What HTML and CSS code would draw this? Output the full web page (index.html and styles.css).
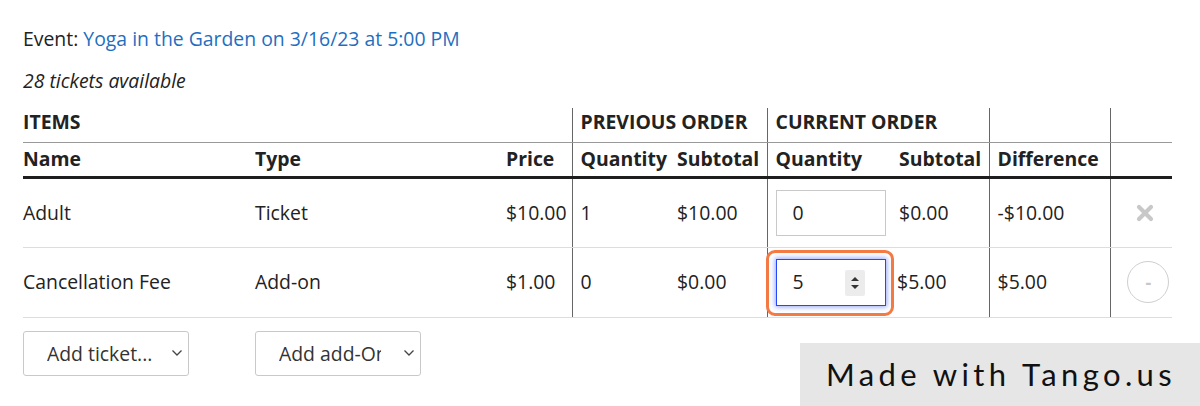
FILE: index.html
```html
<!DOCTYPE html>
<html>
<head>
<meta charset="utf-8">
<link rel="stylesheet" href="styles.css">
</head>
<body>
<div class="page">
  <p class="event">Event: <a class="event-link" href="#">Yoga in the Garden on 3/16/23 at 5:00 PM</a></p>
  <p class="avail">28 tickets available</p>

  <table class="order">
    <colgroup>
      <col class="c-name"><col class="c-type"><col class="c-price">
      <col class="c-pq"><col class="c-ps">
      <col class="c-cq"><col class="c-cs">
      <col class="c-diff"><col class="c-act">
    </colgroup>
    <thead>
      <tr class="group-row">
        <th colspan="3" class="first">ITEMS</th>
        <th colspan="2" class="sep">PREVIOUS ORDER</th>
        <th colspan="2" class="sep">CURRENT ORDER</th>
        <th class="sep"></th>
        <th class="sep"></th>
      </tr>
      <tr class="col-row">
        <th class="first">Name</th>
        <th>Type</th>
        <th>Price</th>
        <th class="sep">Quantity</th>
        <th>Subtotal</th>
        <th class="sep">Quantity</th>
        <th>Subtotal</th>
        <th class="sep">Difference</th>
        <th class="sep"></th>
      </tr>
    </thead>
    <tbody>
      <tr>
        <td class="first">Adult</td>
        <td>Ticket</td>
        <td>$10.00</td>
        <td class="sep">1</td>
        <td>$10.00</td>
        <td class="sep"><div class="qty-box">0</div></td>
        <td>$0.00</td>
        <td class="sep">-$10.00</td>
        <td class="sep act">
          <svg class="x-icon" width="20" height="20" viewBox="0 0 20 20"><path d="M4 4 L16 16 M16 4 L4 16" stroke="#c8c8c8" stroke-width="4.2" stroke-linecap="round"/></svg>
        </td>
      </tr>
      <tr>
        <td class="first">Cancellation Fee</td>
        <td>Add-on</td>
        <td>$1.00</td>
        <td class="sep">0</td>
        <td>$0.00</td>
        <td class="sep">
          <div class="qty-box focused">5
            <span class="spinner">
              <svg width="20" height="26" viewBox="0 0 20 26"><path d="M6 11 L10 7 L14 11 Z" fill="#333"/><path d="M6 15 L10 19 L14 15 Z" fill="#333"/></svg>
            </span>
            <span class="highlight"></span>
          </div>
        </td>
        <td class="tight">$5.00</td>
        <td class="sep">$5.00</td>
        <td class="sep act"><span class="minus">-</span></td>
      </tr>
    </tbody>
  </table>

  <div class="adders">
    <div class="select sel-ticket"><span class="sel-text">Add ticket...</span>
      <svg class="chev" width="12" height="8" viewBox="0 0 12 8"><path d="M1.5 1.5 L6 6 L10.5 1.5" fill="none" stroke="#444" stroke-width="1.3"/></svg>
    </div>
    <div class="select sel-addon"><span class="sel-text">Add add-On</span>
      <svg class="chev" width="12" height="8" viewBox="0 0 12 8"><path d="M1.5 1.5 L6 6 L10.5 1.5" fill="none" stroke="#444" stroke-width="1.3"/></svg>
    </div>
  </div>
</div>
<div class="tango">Made with Tango.us</div>
</body>
</html>
```
FILE: styles.css
```css
html, body {
  margin: 0;
  padding: 0;
  background: #fff;
}
body {
  font-family: "Open Sans", "Liberation Sans", sans-serif;
  font-size: 19.4px;
  color: #222;
  width: 1200px;
  height: 406px;
  overflow: hidden;
  position: relative;
}
.page {
  padding: 26px 28px 0 23px;
}
.event {
  margin: 0;
  line-height: 26px;
}
.event-link {
  color: #1f6fbf;
  text-decoration: none;
}
.avail {
  margin: 16px 0 0;
  line-height: 26px;
  font-style: italic;
}
.order {
  margin-top: 14px;
  border-collapse: collapse;
  table-layout: fixed;
  width: 1149px;
}
.c-name { width: 224px; }
.c-type { width: 251px; }
.c-price { width: 74px; }
.c-pq { width: 97px; }
.c-ps { width: 98px; }
.c-cq { width: 124px; }
.c-cs { width: 98px; }
.c-diff { width: 121px; }
.c-act { width: 62px; }

.order th, .order td {
  padding: 0 8px;
  text-align: left;
  white-space: nowrap;
  overflow: visible;
  box-sizing: border-box;
}
.order th {
  font-weight: 700;
  color: #222;
}
.order .first { padding-left: 0; }
.order .sep { border-left: 1px solid #666; }
.group-row th {
  height: 34px;
  border-bottom: 1px solid #999;
  vertical-align: middle;
  padding-bottom: 6px;
  line-height: 26px;
}
.col-row th {
  height: 35px;
  border-bottom: 3px solid #1e1e1e;
  vertical-align: middle;
  line-height: 26px;
}
.order td {
  height: 70px;
  border-bottom: 1px solid #ddd;
  vertical-align: middle;
  line-height: 26px;
}
.order td.tight { padding-left: 6px; }
.order td.act { text-align: center; padding: 0; }

.qty-box {
  width: 110px;
  height: 46px;
  box-sizing: border-box;
  border: 1px solid #c9c9c9;
  padding-left: 16px;
  display: flex;
  align-items: center;
  position: relative;
}
.qty-box.focused {
  border-color: #2547f5;
  box-shadow: 0 0 5px 1px rgba(60, 90, 255, 0.55);
  height: 47px;
}
.spinner {
  position: absolute;
  right: 20px;
  top: 10px;
  width: 20px;
  height: 26px;
  background: #ececec;
  border-radius: 2px;
}
.spinner svg { display: block; }
.highlight {
  position: absolute;
  left: -11px;
  right: -9px;
  top: -10px;
  bottom: -11px;
  border: 3px solid #f47a44;
  border-radius: 9px;
  pointer-events: none;
}
.x-icon {
  display: block;
  margin: 0 auto;
  position: relative;
  left: 4px;
}
.minus {
  display: inline-flex;
  align-items: center;
  justify-content: center;
  width: 42px;
  height: 42px;
  box-sizing: border-box;
  border: 1px solid #cfcfcf;
  border-radius: 50%;
  color: #c8c8c8;
  font-weight: 700;
  font-size: 18px;
  position: relative;
  left: 7px;
}
.adders {
  display: flex;
  gap: 66px;
  margin-top: 13px;
}
.select {
  width: 166px;
  height: 45px;
  box-sizing: border-box;
  border: 1px solid #c9c9c9;
  border-radius: 3px;
  display: flex;
  align-items: center;
  padding-left: 23px;
  padding-right: 5px;
}
.sel-text {
  overflow: hidden;
  white-space: nowrap;
  color: #333;
}
.sel-ticket .sel-text { width: 118px; }
.sel-addon .sel-text { width: 102px; }
.chev {
  margin-left: auto;
  margin-right: 0;
}
.tango {
  position: absolute;
  left: 800px;
  top: 343px;
  width: 400px;
  height: 63px;
  background: #e6e6e6;
  box-sizing: border-box;
  padding-left: 26px;
  font-family: "Lato", "DejaVu Sans", sans-serif;
  font-size: 31px;
  letter-spacing: 4.4px;
  line-height: 63px;
  color: #111;
  white-space: nowrap;
}
```
